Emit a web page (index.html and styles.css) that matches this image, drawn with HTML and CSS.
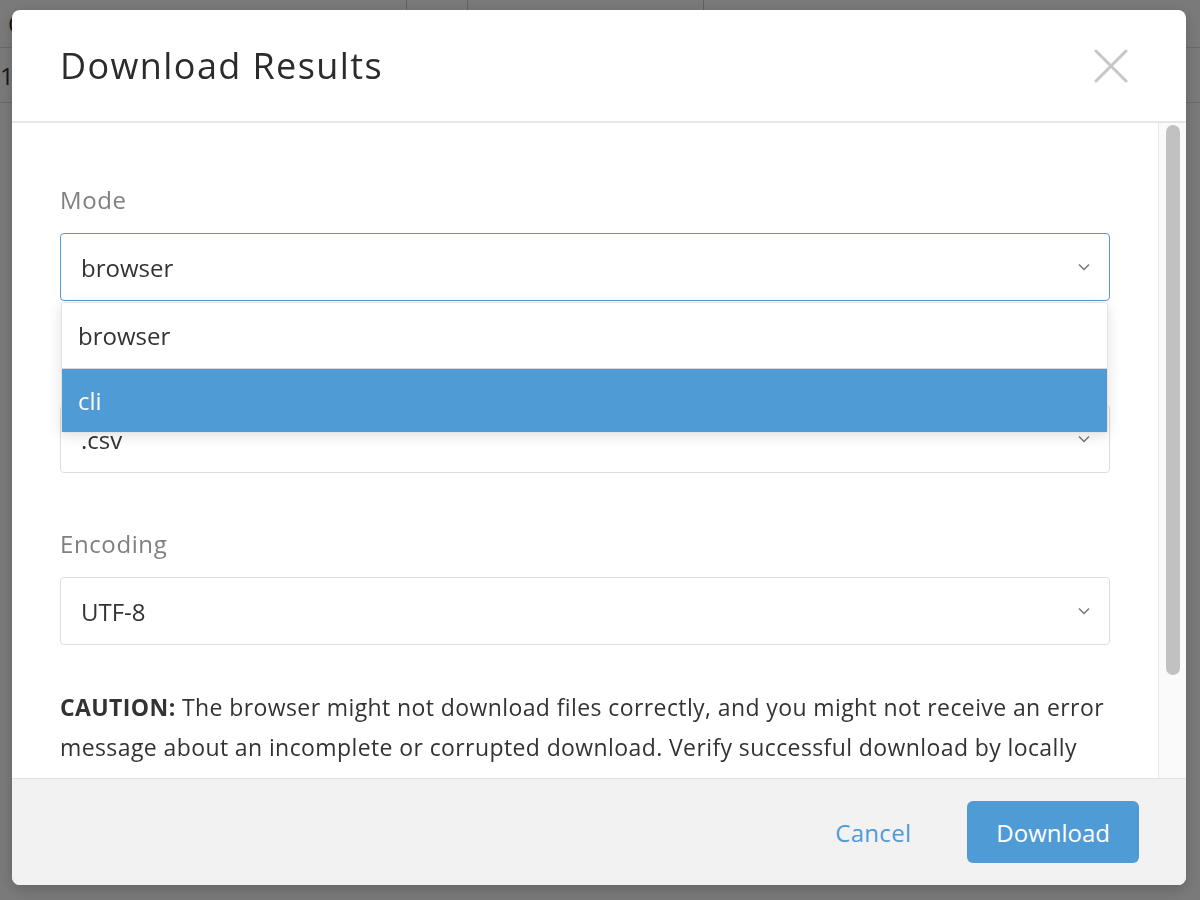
FILE: index.html
```html
<!DOCTYPE html>
<html lang="en">
<head>
  <meta charset="UTF-8">
  <title>Download Results</title>
  <link rel="stylesheet" href="styles.css">
</head>
<body>
  <div class="page">
    <div class="grid-head">
      <div class="cell c1">Query</div>
      <div class="cell c2">Status</div>
      <div class="cell c3">Rows</div>
      <div class="cell c4">Started</div>
    </div>
    <div class="grid-row">
      <div class="cell c1">1</div>
    </div>
  </div>

  <div class="overlay"></div>

  <div class="modal">
    <div class="modal-header">
      <h2>Download Results</h2>
      <button class="close" aria-label="Close">
        <svg width="34" height="34" viewBox="0 0 34 34">
          <path d="M2 2 L32 32 M32 2 L2 32" stroke="#c6c6c6" stroke-width="3" stroke-linecap="round" fill="none"/>
        </svg>
      </button>
    </div>

    <div class="modal-body">
      <div class="body-scroll">
        <div class="field">
          <label>Mode</label>
          <div class="select focus">
            <span>browser</span>
            <svg class="chev" width="12" height="8" viewBox="0 0 12 8"><path d="M1 1.5 L6 6.5 L11 1.5" stroke="#777" stroke-width="1.5" fill="none"/></svg>
            <div class="menu">
              <div class="option">browser</div>
              <div class="option active">cli</div>
            </div>
          </div>
        </div>

        <div class="field">
          <label>Format</label>
          <div class="select">
            <span>.csv</span>
            <svg class="chev" width="12" height="8" viewBox="0 0 12 8"><path d="M1 1.5 L6 6.5 L11 1.5" stroke="#777" stroke-width="1.5" fill="none"/></svg>
          </div>
        </div>

        <div class="field">
          <label>Encoding</label>
          <div class="select">
            <span>UTF-8</span>
            <svg class="chev" width="12" height="8" viewBox="0 0 12 8"><path d="M1 1.5 L6 6.5 L11 1.5" stroke="#777" stroke-width="1.5" fill="none"/></svg>
          </div>
        </div>

        <p class="caution"><b>CAUTION:</b> The browser might not download files correctly, and you might not receive an error message about an incomplete or corrupted download. Verify successful download by locally reading the downloaded file. Alternatively, use the cli mode, and then paste the command into your terminal to download the file.</p>
      </div>
      <div class="scrollbar"><div class="thumb"></div></div>
    </div>

    <div class="modal-footer">
      <button class="btn-link">Cancel</button>
      <button class="btn-primary">Download</button>
    </div>
  </div>
</body>
</html>
```

FILE: styles.css
```css
html, body { margin: 0; height: 100%; }
body { font-family: "Open Sans", Lato, sans-serif; color: #333; background: #fff; overflow: hidden; }

/* page behind the dialog */
.page { font-size: 24px; }
.grid-head, .grid-row { display: flex; border-bottom: 1px solid #ddd; }
.grid-head { height: 47px; }
.grid-row { height: 54px; }
.cell { display: flex; align-items: center; padding-left: 8px; box-sizing: border-box; }
.grid-row .cell { padding-left: 0; }
.c1 { width: 407px; border-right: 1px solid #ccc; }
.c2 { width: 61px; border-right: 1px solid #ccc; }
.c3 { width: 236px; border-right: 1px solid #ccc; }
.grid-row .c1 { border-right: 0; }

.overlay { position: fixed; inset: 0; background: rgba(0,0,0,0.52); }

/* dialog */
.modal {
  position: fixed; top: 10px; left: 12px; width: 1174px; height: 875px;
  background: #fff; border-radius: 8px; overflow: hidden;
  display: flex; flex-direction: column;
  box-shadow: 0 4px 16px rgba(0,0,0,0.2);
}
.modal-header {
  height: 113px; flex: none; box-sizing: border-box;
  display: flex; align-items: center; justify-content: space-between;
  padding: 0 58px 0 48px; border-bottom: 2px solid #e6e6e6;
}
.modal-header h2 { margin: 0; font-size: 36px; font-weight: 400; color: #2b2b2b; letter-spacing: 1.4px; }
.close { background: none; border: 0; padding: 0; width: 34px; height: 34px; cursor: pointer; }
.close svg { display: block; }

.modal-body { flex: 1; min-height: 0; display: flex; }
.body-scroll { flex: 1; overflow: hidden; padding: 61px 48px 40px 48px; }
.scrollbar {
  width: 28px; flex: none; box-sizing: border-box;
  background: #fafafa; border-left: 1px solid #e8e8e8;
  padding: 2px 6px 0 7px;
}
.thumb { height: 550px; background: #c1c1c1; border-radius: 8px; }

.field + .field { margin-top: 55px; }
.field label { display: block; font-size: 24px; letter-spacing: 0.6px; line-height: 32px; color: #808080; margin-bottom: 17px; }

.select {
  position: relative; height: 68px; box-sizing: border-box;
  border: 1px solid #dedede; border-radius: 4px;
  display: flex; align-items: center; justify-content: space-between;
  padding: 0 19px 0 20px; font-size: 24px; color: #333;
}
.select.focus { border-color: #4f9bd5; }
.chev { display: block; }

.menu {
  position: absolute; top: calc(100% + 2px); left: 0; right: 1px; z-index: 2;
  background: #fff; border: 1px solid #e4e4e4; border-radius: 3px;
  box-shadow: 0 3px 14px rgba(0,0,0,0.12);
}
.option { height: 65px; display: flex; align-items: center; padding: 0 16px; font-size: 24px; color: #333; }
.option + .option { border-top: 1px solid #d8d8d8; height: 63px; }
.option.active { background: #4f9bd5; color: #fff; }

.caution { margin: 42px 0 0; font-size: 23px; letter-spacing: 0.4px; line-height: 40px; color: #333; }
.caution b { font-weight: 700; }

.modal-footer {
  height: 107px; flex: none; box-sizing: border-box;
  background: #f2f2f2; border-top: 1px solid #e2e2e2;
  display: flex; align-items: center; justify-content: flex-end; gap: 28px;
  padding: 0 47px;
}
.btn-link { background: none; border: 0; font: inherit; font-size: 24px; letter-spacing: 0.3px; color: #4f9bd5; padding: 0 28px; cursor: pointer; }
.btn-primary {
  background: #4f9bd5; color: #fff; border: 0; border-radius: 6px;
  font: inherit; font-size: 24px; height: 62px; padding: 0 29px; cursor: pointer;
}
```
